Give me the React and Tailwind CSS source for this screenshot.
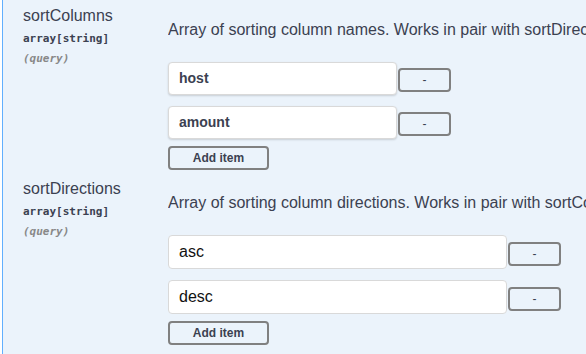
const params = [
  {
    name: 'sortColumns',
    type: 'array[string]',
    description: 'Array of sorting column names. Works in pair with sortDirections.',
    items: ['host', 'amount'],
    bold: true,
  },
  {
    name: 'sortDirections',
    type: 'array[string]',
    description: 'Array of sorting column directions. Works in pair with sortColumns.',
    items: ['asc', 'desc'],
    bold: false,
  },
];

const ParamRow = ({ param }) => {
  return (
    <div className="flex pb-[3px]">
      {/* name column */}
      <div className="w-[165px] shrink-0 pl-[20px] pt-[7px]">
        <div className="text-[16px] leading-[18px] text-[#3b4151]">{param.name}</div>
        <div className="mt-[7px] font-['DejaVu_Sans_Mono',monospace] text-[11px] leading-[13px] font-semibold text-[#3b4151]">
          {param.type}
        </div>
        <div className="mt-[7px] font-['DejaVu_Sans_Mono',monospace] text-[11px] leading-[13px] italic font-semibold text-[#888]">
          (query)
        </div>
      </div>

      {/* description column */}
      <div className="flex-1 min-w-0 pt-[21px]">
        <p className="overflow-hidden whitespace-nowrap text-[16px] leading-[18px] text-[#3b4151]">{param.description}</p>
        {param.items.map((item, i) => (
          <div key={item} className={`flex items-start ${i === 0 ? 'mt-[23px]' : 'mt-[11px]'}`}>
            {param.bold ? (
              <div className="flex h-[33px] w-[229px] items-center rounded-[4px] border border-[#d9d9d9] bg-white px-[10px] text-[14px] font-bold text-[#3b4151] shadow-[0_1px_2px_rgba(0,0,0,0.15)]">
                {item}
              </div>
            ) : (
              <div className="flex h-[34px] w-[339px] items-center rounded-[4px] border border-[#d9d9d9] bg-white px-[10px] text-[16px] text-[#111]">
                {item}
              </div>
            )}
            <button
              className={`ml-[1px] flex h-[24px] w-[53px] items-center justify-center rounded-[4px] border-2 border-[#808080] text-[12px] text-[#3b4151] ${
                param.bold ? 'mt-[6px]' : 'mt-[7px]'
              }`}
            >
              -
            </button>
          </div>
        ))}
        <button className="mt-[7px] flex h-[24px] w-[101px] items-center justify-center rounded-[4px] border-2 border-[#808080] text-[12px] font-bold text-[#3b4151]">
          Add item
        </button>
      </div>
    </div>
  );
};

export default function App() {
  return (
    <div className="h-[354px] w-[586px] overflow-hidden bg-white pl-[2px] font-['Liberation_Sans',Arial,sans-serif]">
      <div className="h-full border-l border-[#61affe] bg-[#ebf3fb]">
        {params.map((p) => (
          <ParamRow key={p.name} param={p} />
        ))}
      </div>
    </div>
  );
}
